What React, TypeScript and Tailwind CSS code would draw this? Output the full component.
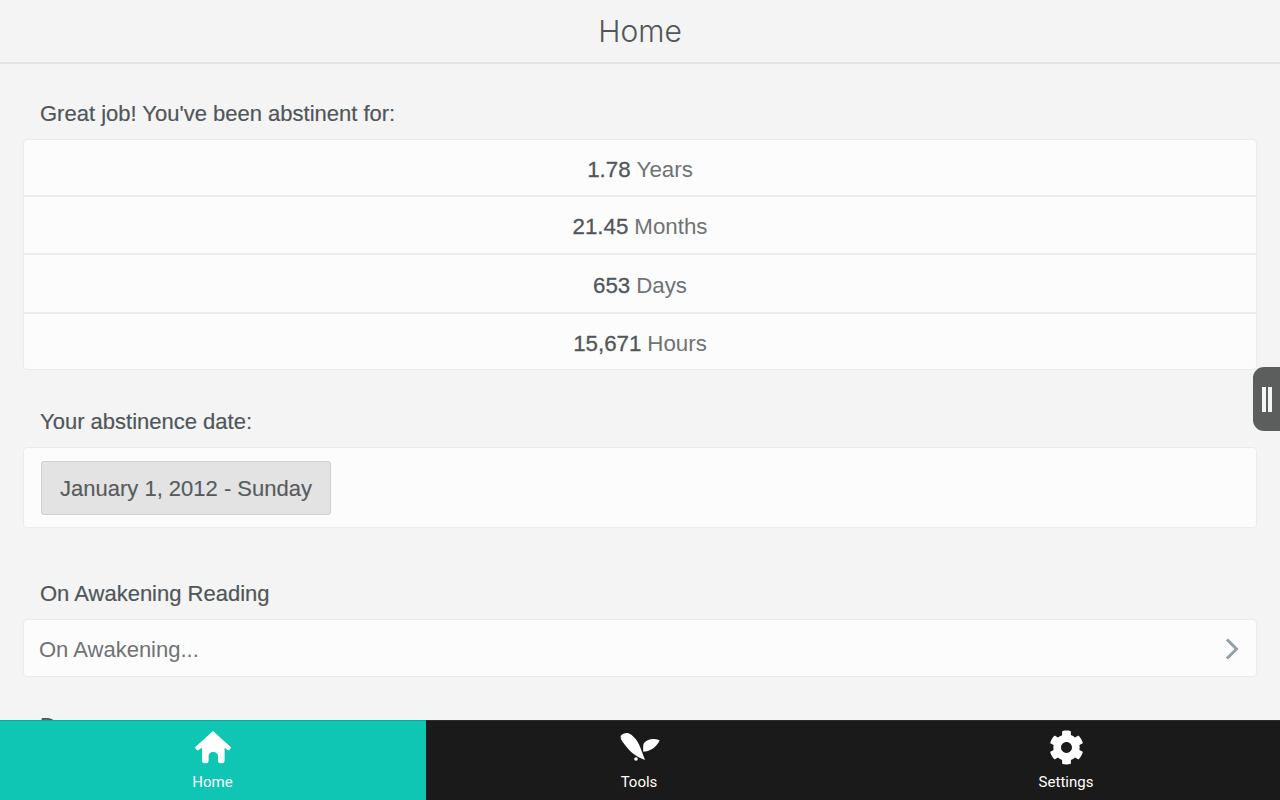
import { FaCog } from "react-icons/fa";

const stats = [
  { value: "1.78", unit: "Years", height: "h-[57px] pt-[5px]" },
  { value: "21.45", unit: "Months", height: "h-[58px] pt-[3px]" },
  { value: "653", unit: "Days", height: "h-[59px] pt-[4px]" },
  { value: "15,671", unit: "Hours", height: "h-[55px] pt-[5px]" },
];

function HomeIcon() {
  return (
    <svg viewBox="0 0 36 33" className="w-[36px] h-[33px]" fill="currentColor">
      <path d="M18 0 L35.4 15.8 Q36.4 16.9 35.2 18 L34.4 18.8 Q33.4 19.7 32.4 19 L29.6 16.8 V29.6 Q29.6 32.2 27 32.2 H25.6 Q23 32.2 23 29.6 V25.5 Q23 21 18 21 Q13.6 21 13.6 25.5 V29.6 Q13.6 32.2 11 32.2 H9.6 Q7 32.2 7 29.6 V16.8 L3.6 19 Q2.6 19.7 1.6 18.8 L0.8 18 Q-0.4 16.9 0.6 15.8 Z" />
    </svg>
  );
}

function LeafIcon() {
  return (
    <svg viewBox="0 0 40 28" className="w-[40px] h-[28px]" fill="currentColor">
      <path d="M0.7 2.7 C3 0.3 6 -0.4 8.3 0.3 C11 1.2 13 3 15 5.3 C17.6 8.5 19 11 20 13.7 C21.6 18 23.6 23 25 27 C21 25.6 17.4 24 14 21.3 C10.6 18.6 7.6 15.4 5 12 C3.2 9.8 1.6 7.6 0.7 5.3 Z" />
      <path d="M39.6 7.2 C36 6 31.6 5.6 28.3 7 C25.4 8.2 23.4 10 23.3 12 C23.1 14.4 23 16.6 23.3 18.7 C25.6 18.6 28 18 30 17 C33.2 15.6 35.2 13.8 36.7 12 C38 10.4 39 8.8 39.6 7.2 Z" />
      <circle cx="16" cy="26" r="1.8" />
    </svg>
  );
}

function TabItem({ label, active, icon, width }: { label: string; active?: boolean; icon: React.ReactNode; width: string }) {
  return (
    <div
      className={`${width} flex flex-col items-center text-white border-t ${
        active ? "bg-[#0fc5b3] border-[#0ea99a]" : "bg-[#1a1a1a] border-[#2e2e2e]"
      }`}
    >
      <div className="h-[44px] mt-[4px] flex items-center justify-center">{icon}</div>
      <span className="text-[15px] leading-[18px] mt-[4px] pr-[1px] font-['Roboto',sans-serif]">{label}</span>
    </div>
  );
}

export default function App() {
  return (
    <div className="relative w-full h-[800px] flex flex-col overflow-hidden bg-[#f4f4f4] text-[#50565a] font-['Liberation_Sans',sans-serif]">
      <header className="h-[64px] shrink-0 flex items-center justify-center border-b-2 border-[#e3e3e3] text-[30px] font-light text-[#50565a] font-['Inter',sans-serif]">
        <span>Home</span>
      </header>

      <main className="flex-1 min-h-0 overflow-hidden px-[23px]">
        <h2 className="mt-[36px] pl-[17px] h-[39px] leading-[28px] text-[22px] [-webkit-text-stroke:0.2px_#50565a]">
          Great job! You've been abstinent for:
        </h2>
        <div className="rounded-[4px] border border-[#ebebeb] bg-[#fcfcfc] divide-y-2 divide-[#ececec] overflow-hidden">
          {stats.map((stat) => (
            <div key={stat.unit} className={`${stat.height} flex items-center justify-center text-[22.3px] text-[#6e7375]`}>
              <span className="font-normal text-[#50565a] [-webkit-text-stroke:0.3px_#50565a]">{stat.value}</span>
              <span className="ml-[6px]">{stat.unit}</span>
            </div>
          ))}
        </div>

        <h2 className="mt-[38px] pl-[17px] h-[39px] leading-[28px] text-[22px] [-webkit-text-stroke:0.2px_#50565a]">
          Your abstinence date:
        </h2>
        <div className="h-[81px] rounded-[4px] border border-[#ebebeb] bg-[#fcfcfc] pl-[17px] pt-[13px]">
          <button className="w-[290px] h-[54px] rounded-[3px] border border-[#d0d0d0] bg-[#e3e3e3] text-[22px] text-[#565b5d] [-webkit-text-stroke:0.15px_#565b5d]">
            January 1, 2012 - Sunday
          </button>
        </div>

        <h2 className="mt-[52px] pl-[17px] h-[39px] leading-[28px] text-[22px] [-webkit-text-stroke:0.2px_#50565a]">
          On Awakening Reading
        </h2>
        <div className="h-[58px] rounded-[4px] border border-[#ebebeb] bg-[#fcfcfc] pl-[15px] pr-[17px] pt-[2px] flex items-center justify-between text-[22px] text-[#6e7375]">
          <span>On Awakening...</span>
          <svg viewBox="0 0 14 22" className="w-[14px] h-[22px]" fill="none" stroke="#93a0a5" strokeWidth="3">
            <path d="M2 1.5 L11.5 11 L2 20.5" />
          </svg>
        </div>

        <h2 className="mt-[35px] pl-[17px] leading-[28px] text-[22px] [-webkit-text-stroke:0.2px_#50565a]">Dreams</h2>
      </main>

      <nav className="h-[80px] shrink-0 flex">
        <TabItem label="Home" active width="w-[426px]" icon={<HomeIcon />} />
        <TabItem label="Tools" width="w-[427px]" icon={<LeafIcon />} />
        <TabItem label="Settings" width="w-[427px]" icon={<FaCog className="w-[35px] h-[35px]" />} />
      </nav>

      <div className="absolute right-0 top-[367px] w-[27px] h-[64px] rounded-l-[11px] bg-[#5c5e5e] flex items-center justify-center gap-[2px]">
        <span className="w-[4px] h-[25px] bg-[#f5f5f5]" />
        <span className="w-[4px] h-[25px] bg-[#f5f5f5]" />
      </div>
    </div>
  );
}
